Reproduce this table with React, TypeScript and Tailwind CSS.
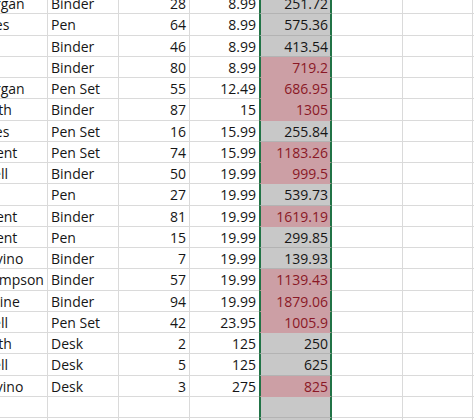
const rows: [string, string, string, string, string][] = [
  ['Morgan', 'Binder', '28', '8.99', '251.72'],
  ['Jones', 'Pen', '64', '8.99', '575.36'],
  ['Gill', 'Binder', '46', '8.99', '413.54'],
  ['Gill', 'Binder', '80', '8.99', '719.2'],
  ['Morgan', 'Pen Set', '55', '12.49', '686.95'],
  ['Smith', 'Binder', '87', '15', '1305'],
  ['Jones', 'Pen Set', '16', '15.99', '255.84'],
  ['Parent', 'Pen Set', '74', '15.99', '1183.26'],
  ['Kivell', 'Binder', '50', '19.99', '999.5'],
  ['Gill', 'Pen', '27', '19.99', '539.73'],
  ['Parent', 'Binder', '81', '19.99', '1619.19'],
  ['Parent', 'Pen', '15', '19.99', '299.85'],
  ['Sorvino', 'Binder', '7', '19.99', '139.93'],
  ['Thompson', 'Binder', '57', '19.99', '1139.43'],
  ['Jardine', 'Binder', '94', '19.99', '1879.06'],
  ['Kivell', 'Pen Set', '42', '23.95', '1005.9'],
  ['Smith', 'Desk', '2', '125', '250'],
  ['Kivell', 'Desk', '5', '125', '625'],
  ['Sorvino', 'Desk', '3', '275', '825'],
  ['', '', '', '', ''],
  ['', '', '', '', ''],
];

const cell = 'flex h-full shrink-0 items-center whitespace-nowrap overflow-hidden border-b border-[#dadada] pt-[1px]';

function Row({ data }: { data: [string, string, string, string, string] }) {
  const [rep, item, units, cost, total] = data;
  const hot = total !== '' && Number(total) > 650;

  return (
    <div className="flex h-[21.25px]">
      <div className={`${cell} -ml-[29px] w-[77px] border-r pl-[3px]`}>{rep}</div>
      <div className={`${cell} w-[71px] border-r pl-[3px]`}>{item}</div>
      <div className={`${cell} w-[71px] border-r justify-end pr-[3px]`}>{units}</div>
      <div className={`${cell} w-[69px] justify-end pr-[3px]`}>{cost}</div>
      <div
        className={`${cell} w-[73px] justify-end border-l-2 border-r-2 border-l-[#217346] border-r-[#217346] pr-[2px] ${
          hot ? 'bg-[#cc9fa5] border-b-[#cc9fa5] text-[#8a1826]' : 'bg-[#c8c8c8] border-b-[#b3b3b3]'
        }`}
      >
        {total}
      </div>
      <div className={`${cell} w-[71px] border-r`} />
      <div className={`${cell} w-[70px] border-r`} />
      <div className={`${cell} flex-1`} />
    </div>
  );
}

export default function App() {
  return (
    <div className="h-[420px] w-[474px] overflow-hidden bg-white font-['Open_Sans',sans-serif] text-[14px] text-[#161616]">
      <div className="-mt-[7px]">
        {rows.map((r, i) => (
          <Row key={i} data={r} />
        ))}
      </div>
    </div>
  );
}
